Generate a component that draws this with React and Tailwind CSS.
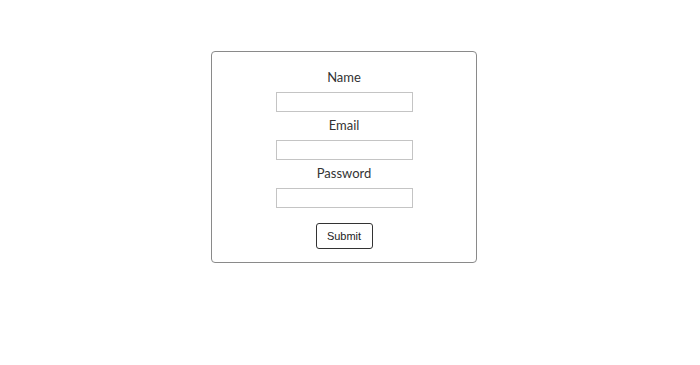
export default function App() {
  return (
    <div className="w-[700px] h-[365px] bg-white pt-[51px] pl-[211px]">
      <div className="w-[266px] h-[212px] border border-[#8a8a8a] rounded-[4px] flex flex-col items-center pt-[16px]">
        {["Name", "Email", "Password"].map((l, i) => (
          <div key={l} className="flex flex-col items-center">
            <div className={`${i === 0 ? "mt-0" : "mt-[4px]"} h-[18px] leading-[18px] text-[13px] text-[#333] mb-[6px] font-['Lato',sans-serif]`}>
              {l}
            </div>
            <input
              type={l === "Password" ? "password" : "text"}
              className="w-[137px] h-[20px] border border-[#c4c4c4] bg-white outline-none"
            />
          </div>
        ))}
        <button className="mt-[15px] w-[57px] h-[26px] border border-[#333] rounded-[3px] bg-white text-[11px] text-[#222] font-['Liberation_Sans',Arial,sans-serif]">
          Submit
        </button>
      </div>
    </div>
  );
}
